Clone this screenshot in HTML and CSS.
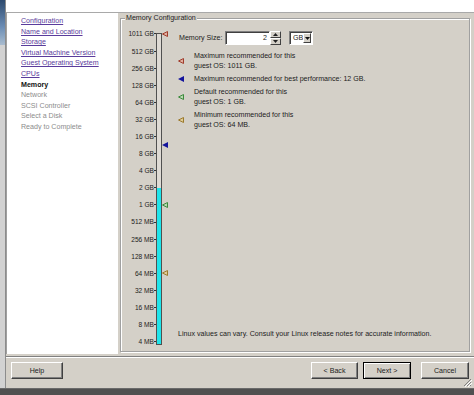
FILE: index.html
```html
<!DOCTYPE html>
<html>
<head>
<meta charset="utf-8">
<link rel="stylesheet" href="styles.css">
</head>
<body>
<div class="screen">
  <div class="edge"><div class="edge-img"></div></div>
  <div class="win">
    <div class="header"></div>
    <div class="main">
      <nav class="steps">
        <a class="link">Configuration</a>
        <a class="link">Name and Location</a>
        <a class="link">Storage</a>
        <a class="link">Virtual Machine Version</a>
        <a class="link">Guest Operating System</a>
        <a class="link">CPUs</a>
        <span class="current">Memory</span>
        <span class="off">Network</span>
        <span class="off">SCSI Controller</span>
        <span class="off">Select a Disk</span>
        <span class="off">Ready to Complete</span>
      </nav>
      <section class="group">
        <span class="group-title">Memory Configuration</span>
        <div class="group-body">
          <div class="scale">
            <span class="lbl">1011 GB</span><span class="tick"></span>
            <span class="lbl">512 GB</span><span class="tick"></span>
            <span class="lbl">256 GB</span><span class="tick"></span>
            <span class="lbl">128 GB</span><span class="tick"></span>
            <span class="lbl">64 GB</span><span class="tick"></span>
            <span class="lbl">32 GB</span><span class="tick"></span>
            <span class="lbl">16 GB</span><span class="tick"></span>
            <span class="lbl">8 GB</span><span class="tick"></span>
            <span class="lbl">4 GB</span><span class="tick"></span>
            <span class="lbl">2 GB</span><span class="tick"></span>
            <span class="lbl">1 GB</span><span class="tick"></span>
            <span class="lbl">512 MB</span><span class="tick"></span>
            <span class="lbl">256 MB</span><span class="tick"></span>
            <span class="lbl">128 MB</span><span class="tick"></span>
            <span class="lbl">64 MB</span><span class="tick"></span>
            <span class="lbl">32 MB</span><span class="tick"></span>
            <span class="lbl">16 MB</span><span class="tick"></span>
            <span class="lbl">8 MB</span><span class="tick"></span>
            <span class="lbl">4 MB</span><span class="tick"></span>
            <div class="track"></div>
            <svg class="pin" style="top:5.5px" viewBox="0 0 6 6" width="6" height="6"><polygon points="0.5,3 5.5,0.5 5.5,5.5" fill="#e0b0a0" stroke="#a03c2c" stroke-width="1"/></svg>
            <svg class="pin" style="top:116.5px" viewBox="0 0 6 6" width="6" height="6"><polygon points="0,3 6,0 6,6" fill="#14149c"/></svg>
            <svg class="pin" style="top:176.5px" viewBox="0 0 6 6" width="6" height="6"><polygon points="0.5,3 5.5,0.5 5.5,5.5" fill="#b8d8b0" stroke="#3c8a3c" stroke-width="1"/></svg>
            <svg class="pin" style="top:245px" viewBox="0 0 6 6" width="6" height="6"><polygon points="0.5,3 5.5,0.5 5.5,5.5" fill="#e0cc98" stroke="#9c7a2c" stroke-width="1"/></svg>
          </div>
          <div class="details">
            <div class="size-row">
              <span class="size-label">Memory Size:</span>
              <span class="num">2</span>
              <span class="spin">
                <span class="spin-btn"><svg viewBox="0 0 5 3" width="5" height="3"><polygon points="0,3 2.5,0 5,3" fill="#222"/></svg></span>
                <span class="spin-btn"><svg viewBox="0 0 5 3" width="5" height="3"><polygon points="0,0 5,0 2.5,3" fill="#222"/></svg></span>
              </span>
              <span class="combo"><span class="combo-val">GB</span><span class="combo-btn"><svg viewBox="0 0 5 3" width="5" height="3"><polygon points="0,0 5,0 2.5,3" fill="#111"/></svg></span></span>
            </div>
            <ul class="legend">
              <li class="item"><svg class="mark" viewBox="0 0 6 6" width="6" height="6"><polygon points="0.5,3 5.5,0.5 5.5,5.5" fill="#e0b0a0" stroke="#a03c2c" stroke-width="1"/></svg><span>Maximum recommended for this<br>guest OS: 1011 GB.</span></li>
              <li class="item"><svg class="mark" viewBox="0 0 6 6" width="6" height="6"><polygon points="0,3 6,0 6,6" fill="#14149c"/></svg><span>Maximum recommended for best performance: 12 GB.</span></li>
              <li class="item"><svg class="mark" viewBox="0 0 6 6" width="6" height="6"><polygon points="0.5,3 5.5,0.5 5.5,5.5" fill="#b8d8b0" stroke="#3c8a3c" stroke-width="1"/></svg><span>Default recommended for this<br>guest OS: 1 GB.</span></li>
              <li class="item"><svg class="mark" viewBox="0 0 6 6" width="6" height="6"><polygon points="0.5,3 5.5,0.5 5.5,5.5" fill="#e0cc98" stroke="#9c7a2c" stroke-width="1"/></svg><span>Minimum recommended for this<br>guest OS: 64 MB.</span></li>
            </ul>
            <p class="note">Linux values can vary. Consult your Linux release notes for accurate information.</p>
          </div>
        </div>
      </section>
    </div>
    <div class="footer">
      <button class="btn btn-help">Help</button>
      <span class="spacer"></span>
      <button class="btn btn-back">&lt; Back</button>
      <button class="btn btn-next">Next &gt;</button>
      <button class="btn btn-cancel">Cancel</button>
      <svg class="grip" viewBox="0 0 10 10" width="10" height="10"><path d="M9 2L2 9M9 5L5 9M9 8L8 9" stroke="#808080" stroke-width="1"/><path d="M10 3L3 10M10 6L6 10" stroke="#fff" stroke-width="1"/></svg>
    </div>
  </div>
</div>
<div class="taskbar"></div>
</body>
</html>
```

FILE: styles.css
```css
* { box-sizing: border-box; margin: 0; padding: 0; }
html, body { width: 474px; height: 395px; overflow: hidden; }
body {
  font-family: "Liberation Sans", Arial, sans-serif;
  font-size: 7.1px;
  color: #1c1c1c;
  background: #d4d0c8;
  display: flex;
  flex-direction: column;
}
.screen { display: flex; height: 388px; }
.edge {
  width: 6px;
  background: #d2d2d2;
  border-right: 1px solid #8c8c8c;
  display: flex;
  flex-direction: column;
}
.edge-img { height: 45px; background: linear-gradient(#2d4a6e, #6b8db5 60%, #a9bccf); }
.win { flex: 1; display: flex; flex-direction: column; background: #d4d0c8; }
.header { height: 13px; background: #fff; border-bottom: 1px solid #a9a9a9; }
.main { flex: 1; display: flex; gap: 2px; padding-right: 4px; min-height: 0; }

.steps {
  width: 112px;
  background: #fff;
  border-left: 1px solid #a0a0a0;
  margin-bottom: 2px;
  padding: 3px 0 0 14px;
  display: flex;
  flex-direction: column;
  align-items: flex-start;
  line-height: 10.6px;
}
.link { color: #5a3c9c; text-decoration: underline; }
.current { font-weight: bold; color: #111; }
.off { color: #8c8c8c; }

.group {
  flex: 1;
  margin: 5px 0 4px;
  border: 1px solid #a0a0a0;
  box-shadow: 1px 1px 0 #fff, inset 1px 1px 0 #fff;
  display: flex;
  flex-direction: column;
}
.group-title {
  align-self: flex-start;
  margin: -6px 0 0 4px;
  padding: 0 1px;
  height: 10px;
  line-height: 10px;
  background: #d4d0c8;
}
.group-body { flex: 1; display: flex; gap: 10px; }

.scale {
  position: relative;
  margin-top: 2.45px;
  align-self: flex-start;
  display: grid;
  grid-template-columns: 33px 2px 6px 6px;
  grid-template-rows: repeat(19, 17.1px);
}
.lbl {
  grid-column: 1;
  text-align: right;
  line-height: 17.1px;
  font-size: 6.6px;
  white-space: nowrap;
}
.tick { grid-column: 2; align-self: center; height: 1px; background: #333; }
.track {
  grid-column: 3;
  grid-row: 1 / -1;
  margin-top: 7.5px;
  margin-bottom: 5.4px;
  border: 1px solid #505050;
  background: linear-gradient(to bottom, #dedad4 154px, #20e4ea 154px);
}
.pin { position: absolute; left: 41px; }

.details { flex: 1; display: flex; flex-direction: column; }
.size-row { margin-top: 8px; display: flex; align-items: center; height: 14px; padding-left: 1px; }
.size-label { width: 46px; }
.num {
  width: 45px;
  height: 14px;
  background: #fff;
  border: 1px solid;
  border-color: #808080 #fff #fff #808080;
  box-shadow: inset 1px 1px 0 #404040;
  text-align: right;
  line-height: 12px;
  padding-right: 2px;
}
.spin { width: 11px; height: 14px; display: flex; flex-direction: column; }
.spin-btn {
  flex: 1;
  display: flex;
  align-items: center;
  justify-content: center;
  background: #d4d0c8;
  border: 1px solid;
  border-color: #fff #404040 #404040 #fff;
}
.combo {
  margin-left: 8px;
  width: 24px;
  height: 14px;
  background: #fff;
  border: 1px solid;
  border-color: #808080 #fff #fff #808080;
  box-shadow: inset 1px 1px 0 #404040;
  display: flex;
  padding: 1px 1px 1px 1px;
}
.combo-val { flex: 1; line-height: 11px; padding-left: 2px; }
.combo-btn {
  width: 9px;
  display: flex;
  align-items: center;
  justify-content: center;
  background: #d4d0c8;
  border: 1px solid;
  border-color: #fff #404040 #404040 #fff;
}

.legend { list-style: none; margin-top: 6px; display: flex; flex-direction: column; gap: 3px; line-height: 10px; }
.item { display: flex; align-items: center; gap: 10px; }
.mark { flex: none; }

.note { margin-top: auto; margin-bottom: 12px; line-height: 10px; }

.footer {
  position: relative;
  height: 32px;
  border-top: 1px solid #808080;
  box-shadow: inset 0 1px 0 #fff;
  display: flex;
  align-items: flex-start;
  padding: 5px 5px 0 5px;
}
.spacer { flex: 1; }
.btn {
  height: 17px;
  font-family: "Liberation Sans", Arial, sans-serif;
  font-size: 7.1px;
  color: #1c1c1c;
  background: #d4d0c8;
  border: 1px solid;
  border-color: #fff #404040 #404040 #fff;
  box-shadow: inset -1px -1px 0 #808080;
}
.btn-help { width: 52px; }
.btn-back { width: 47px; }
.btn-next { width: 48px; margin-left: 5px; border-color: #000; box-shadow: inset 1px 1px 0 #fff, inset -1px -1px 0 #808080; }
.btn-cancel { width: 48px; margin-left: 10px; }
.grip { position: absolute; right: 2px; bottom: 1px; }

.taskbar { height: 7px; background: #505050; border-top: 1px solid #6a6a6a; }
```
